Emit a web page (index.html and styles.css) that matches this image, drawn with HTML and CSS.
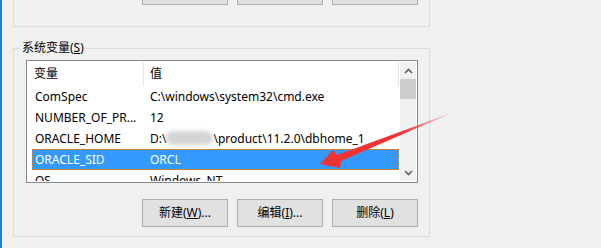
FILE: index.html
```html
<!DOCTYPE html>
<html>
<head>
<meta charset="utf-8">
<link rel="stylesheet" href="styles.css">
</head>
<body>
<div class="page">
  <div class="content">
    <div class="top-group">
      <div class="btn-row top-btns">
        <div class="btn"></div>
        <div class="btn"></div>
        <div class="btn"></div>
      </div>
    </div>
    <fieldset class="group">
      <legend class="legend">系统变量(<u>S</u>)</legend>
      <div class="listbox">
        <div class="list">
          <div class="header">
            <div class="hcol1">变量</div>
            <div class="hcol2">值</div>
          </div>
          <div class="row"><div class="c1">ComSpec</div><div class="c2">C:\windows\system32\cmd.exe</div></div>
          <div class="row"><div class="c1">NUMBER_OF_PR...</div><div class="c2">12</div></div>
          <div class="row"><div class="c1">ORACLE_HOME</div><div class="c2">D:\<span class="blur"></span>\product\11.2.0\dbhome_1</div></div>
          <div class="row selected"><div class="c1">ORACLE_SID</div><div class="c2">ORCL</div></div>
          <div class="row"><div class="c1">OS</div><div class="c2">Windows_NT</div></div>
        </div>
        <div class="scrollbar">
          <div class="sb-arrow">
            <svg width="9" height="6" viewBox="0 0 9 6"><path d="M1 5 L4.5 1.5 L8 5" fill="none" stroke="#606060" stroke-width="1.6"/></svg>
          </div>
          <div class="sb-thumb"></div>
          <div class="sb-track"></div>
          <div class="sb-arrow">
            <svg width="9" height="6" viewBox="0 0 9 6"><path d="M1 1 L4.5 4.5 L8 1" fill="none" stroke="#606060" stroke-width="1.6"/></svg>
          </div>
        </div>
      </div>
      <div class="btn-row bottom-btns">
        <div class="btn">新建(<u>W</u>)...</div>
        <div class="btn">编辑(<u>I</u>)...</div>
        <div class="btn">删除(<u>L</u>)</div>
      </div>
    </fieldset>
  </div>
  <svg class="arrow" width="601" height="248" viewBox="0 0 601 248">
    <defs>
      <linearGradient id="fade" x1="320" y1="164" x2="455" y2="112" gradientUnits="userSpaceOnUse">
        <stop offset="0" stop-color="#f23333"/>
        <stop offset="0.6" stop-color="#f23333"/>
        <stop offset="1" stop-color="#f23333" stop-opacity="0.15"/>
      </linearGradient>
    </defs>
    <polygon points="320,164 333,150 337,155 454,112 341,161 340,168" fill="url(#fade)"/>
  </svg>
</div>
</body>
</html>
```
FILE: styles.css
```css
html, body {
  margin: 0;
  padding: 0;
}
body {
  background: #f0f0f0;
  font-family: "Noto Sans", "Noto Sans CJK SC", sans-serif;
  font-size: 12px;
  color: #000;
}
.page {
  position: relative;
  width: 601px;
  height: 248px;
  overflow: hidden;
  border-left: 2px solid #1e7fe0;
  box-sizing: border-box;
}
.content {
  padding-left: 11px;
  width: 417px;
  display: flow-root;
}
.top-group {
  display: flow-root;
  height: 26px;
  border: 1px solid #dcdcdc;
  border-top: none;
}
.btn-row {
  display: flex;
  gap: 9px;
  padding-left: 128px;
}
.top-btns {
  margin-top: -23px;
}
.btn {
  width: 84px;
  height: 26px;
  background: #e1e1e1;
  border: 1px solid #adadad;
  display: flex;
  align-items: center;
  justify-content: center;
  line-height: 14px;
}
.group {
  margin: 14px 0 0 0;
  padding: 0;
  border: 1px solid #dcdcdc;
  min-width: 0;
  height: 196px;
  box-sizing: border-box;
}
.legend {
  margin-left: 6px;
  padding: 0 2px;
  line-height: 14px;
}
.listbox {
  margin: 5px 0 0 12px;
  border: 1px solid #828790;
  padding: 1px;
  box-sizing: content-box;
  width: 388px;
  height: 119px;
  background: #fff;
  display: flex;
}
.list {
  width: 372px;
  overflow: hidden;
}
.header {
  display: flex;
  height: 24px;
  align-items: center;
}
.hcol1 {
  width: 109px;
  padding-left: 6px;
  height: 24px;
  line-height: 24px;
  border-right: 1px solid #e5e5e5;
}
.hcol2 {
  width: 248px;
  padding-left: 6px;
  height: 24px;
  line-height: 24px;
  border-right: 1px solid #e5e5e5;
}
.row {
  display: flex;
  height: 21px;
  line-height: 21px;
  margin-left: 4px;
  width: 367px;
  box-sizing: border-box;
  white-space: nowrap;
}
.c1 {
  width: 108px;
  padding-left: 3px;
}
.c2 {
  padding-left: 7px;
}
.row.selected {
  background: #3399ff;
  color: #fff;
  outline: 1px dotted #d08a3a;
  outline-offset: -1px;
}
.blur {
  display: inline-block;
  width: 47px;
  height: 14px;
  vertical-align: -2px;
  background: #d4d4d4;
  border-radius: 7px;
  filter: blur(2px);
}
.scrollbar {
  width: 16px;
  background: #f0f0f0;
  display: flex;
  flex-direction: column;
}
.sb-arrow {
  height: 17px;
  display: flex;
  align-items: center;
  justify-content: center;
}
.sb-thumb {
  height: 20px;
  background: #cdcdcd;
}
.sb-track {
  flex: 1;
}
.bottom-btns {
  margin-top: 16px;
  padding-left: 128px;
}
.arrow {
  position: absolute;
  left: -2px;
  top: 0;
}
```
